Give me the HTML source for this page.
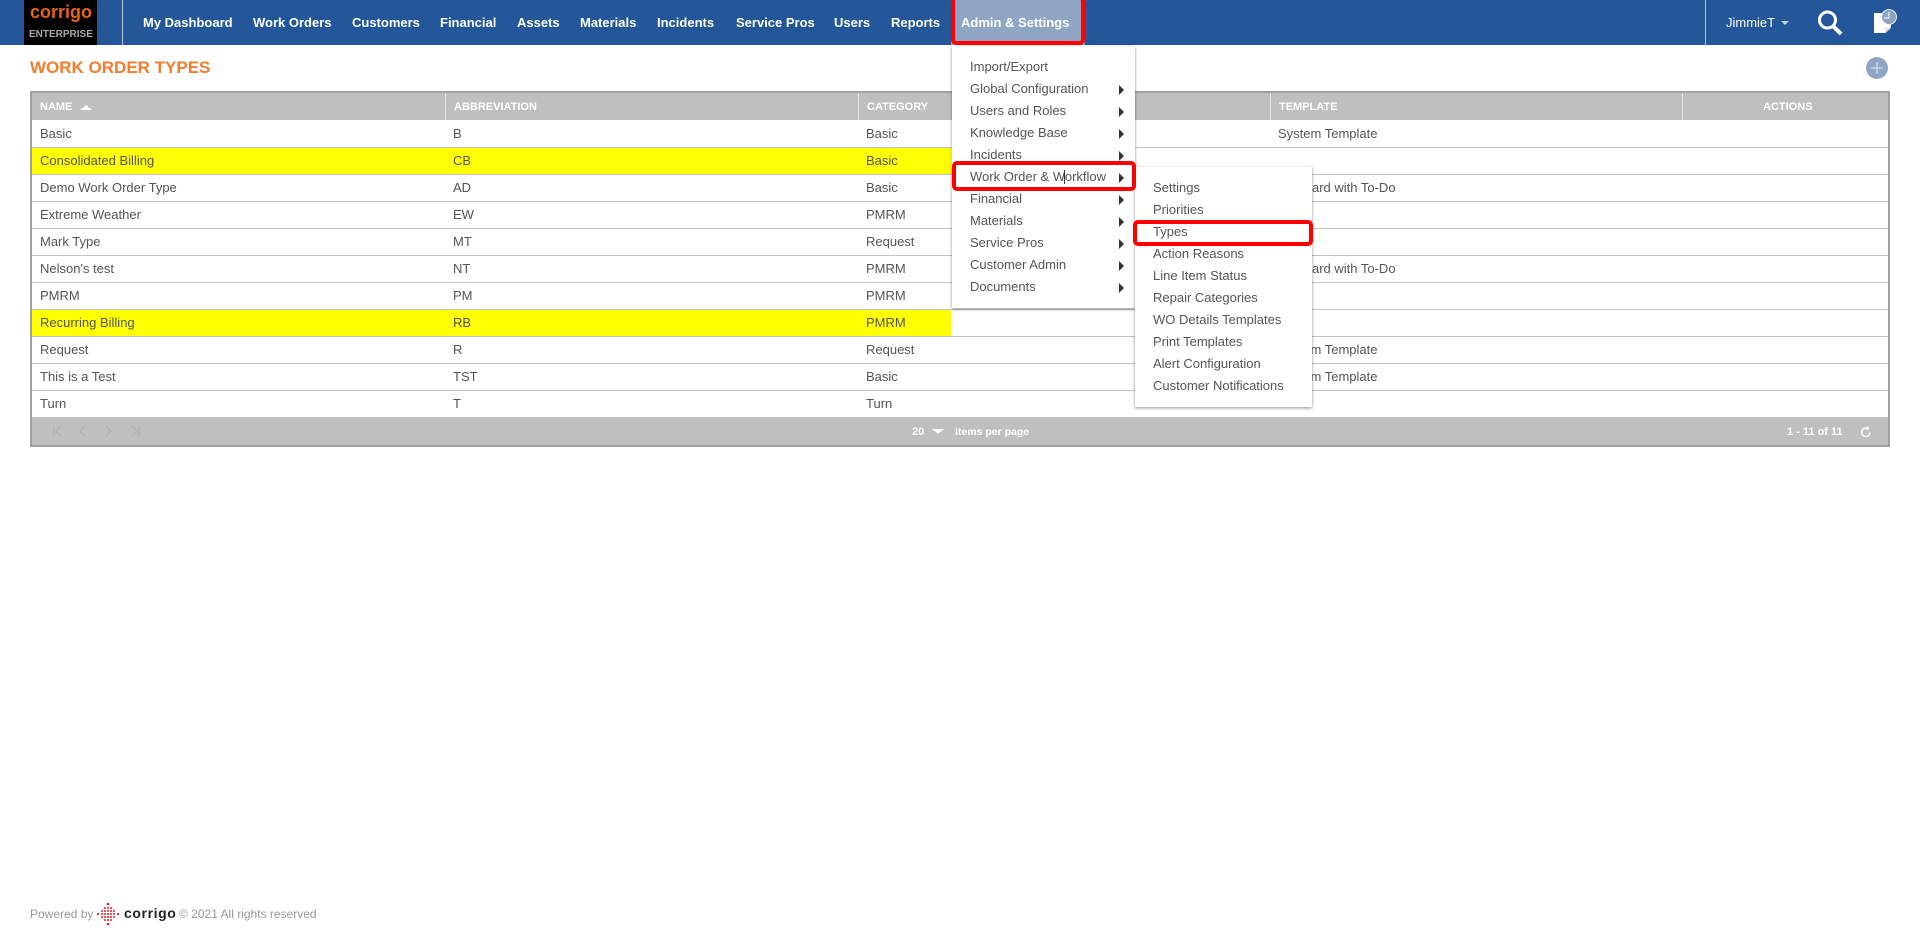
<!DOCTYPE html>
<html><head><meta charset="utf-8"><title>Work Order Types</title>
<style>
*{box-sizing:border-box}
html,body{margin:0;padding:0;width:1920px;height:937px;background:#fff;overflow:hidden;font-family:"Liberation Sans",Arial,sans-serif;color:#555;font-size:13px}
.a{position:absolute;white-space:nowrap}
#hd{position:absolute;left:0;top:0;width:1920px;height:45px;background:#235799}
.n{position:absolute;top:0;line-height:45px;color:#fff;font-weight:bold;font-size:13px;white-space:nowrap}
#tb{position:absolute;left:30px;top:91px;width:1860px;height:356px;border:2px solid #a0a0a0;background:#fff}
.th{position:absolute;top:94px;height:27px;color:#fff;font-weight:bold;font-size:11px;line-height:27px;white-space:nowrap}
.l{position:absolute;left:32px;width:1856px;height:1px;background:#c4c4c4}
.t{position:absolute;line-height:27px;height:27px;white-space:nowrap;color:#555}
.y{position:absolute;left:32px;width:919px;height:27px;background:#ff0}
.m{position:absolute;background:#fff;box-shadow:0 1px 3px rgba(0,0,0,.45)}
.i{position:absolute;line-height:22px;height:22px;white-space:nowrap;color:#555;margin-top:1px}
.r{position:absolute;width:0;height:0;border-left:5px solid #333;border-top:5px solid transparent;border-bottom:5px solid transparent;left:1119px;margin-top:1px}
.b{position:absolute;border:4px solid #f00;border-radius:5px}
</style></head><body>
<div id="hd"></div>
<div class="a" style="left:24px;top:0;width:73px;height:45px;background:#000"></div>
<div class="a" style="left:30px;top:0;font-size:18px;line-height:24px;color:#e8640c;font-weight:bold">corrigo</div>
<div class="a" style="left:29px;top:28px;font-size:10px;line-height:14px;font-weight:bold;color:#aaa">ENTERPRISE</div>
<div class="a" style="left:122px;top:0;width:1px;height:45px;background:#b9c6d9"></div>
<div class="a" style="left:951px;top:0;width:134px;height:45px;background:#8fa5c4"></div>
<div class="n" style="left:143px">My Dashboard</div>
<div class="n" style="left:253px">Work Orders</div>
<div class="n" style="left:352px">Customers</div>
<div class="n" style="left:440px">Financial</div>
<div class="n" style="left:517px">Assets</div>
<div class="n" style="left:580px">Materials</div>
<div class="n" style="left:657px">Incidents</div>
<div class="n" style="left:736px">Service Pros</div>
<div class="n" style="left:834px">Users</div>
<div class="n" style="left:891px">Reports</div>
<div class="n" style="left:961px">Admin &amp; Settings</div>
<div class="a" style="left:1705px;top:0;width:1px;height:45px;background:#b9c6d9"></div>
<div class="n" style="left:1726px;font-weight:normal">JimmieT</div>
<div class="a" style="left:1781px;top:21px;width:0;height:0;border-left:4px solid transparent;border-right:4px solid transparent;border-top:4px solid #c9d3e2"></div>
<svg class="a" style="left:1816px;top:9px" width="28" height="28" viewBox="0 0 28 28"><circle cx="11.5" cy="11" r="8" fill="none" stroke="#fff" stroke-width="3"/><path d="M17 17L25 25" stroke="#fff" stroke-width="4" fill="none"/></svg>
<svg class="a" style="left:1870px;top:8px" width="28" height="28" viewBox="0 0 28 28"><path d="M4 5H21V19L15 25H4Z" fill="#fff"/><path d="M15.5 25V20H21Z" fill="#d5ddea"/><circle cx="19" cy="9" r="7.5" fill="#8fa5c4" stroke="#fff" stroke-width=".8"/><path d="M19 4V10H14" stroke="#fff" stroke-width="1" fill="none"/></svg>

<div class="a" style="left:30px;top:56px;font-size:17px;line-height:24px;font-weight:bold;color:#f47c2c">WORK ORDER TYPES</div>
<svg class="a" style="left:1866px;top:57px" width="22" height="22" viewBox="0 0 22 22"><circle cx="11" cy="11" r="11" fill="#8fa5c4"/><path d="M11 5V17M5 11H17" stroke="#c9d4e4" stroke-width="1.5"/></svg>

<div id="tb"></div>
<div class="a" style="left:32px;top:93px;width:1856px;height:27px;background:#bfbfbf"></div>
<div class="a" style="left:445px;top:93px;width:1px;height:27px;background:#e6e6e6"></div>
<div class="a" style="left:858px;top:93px;width:1px;height:27px;background:#e6e6e6"></div>
<div class="a" style="left:1270px;top:93px;width:1px;height:27px;background:#e6e6e6"></div>
<div class="a" style="left:1682px;top:93px;width:1px;height:27px;background:#e6e6e6"></div>
<div class="th" style="left:40px">NAME</div>
<div class="a" style="left:80px;top:105px;width:0;height:0;border-left:6px solid transparent;border-right:6px solid transparent;border-bottom:5px solid #fff"></div>
<div class="th" style="left:454px">ABBREVIATION</div>
<div class="th" style="left:867px">CATEGORY</div>
<div class="th" style="left:1279px">TEMPLATE</div>
<div class="th" style="left:1763px">ACTIONS</div>

<div class="y" style="top:147px"></div>
<div class="y" style="top:309px"></div>
<div class="l" style="top:147px"></div><div class="l" style="top:174px;"></div><div class="l" style="top:201px"></div><div class="l" style="top:228px"></div><div class="l" style="top:255px"></div><div class="l" style="top:282px"></div><div class="l" style="top:309px"></div><div class="l" style="top:336px"></div><div class="l" style="top:363px"></div><div class="l" style="top:390px"></div>

<div class="t" style="left:40px;top:120px">Basic</div><div class="t" style="left:453px;top:120px">B</div><div class="t" style="left:866px;top:120px">Basic</div><div class="t" style="left:1278px;top:120px">System Template</div>
<div class="t" style="left:40px;top:147px">Consolidated Billing</div><div class="t" style="left:453px;top:147px">CB</div><div class="t" style="left:866px;top:147px">Basic</div>
<div class="t" style="left:40px;top:174px">Demo Work Order Type</div><div class="t" style="left:453px;top:174px">AD</div><div class="t" style="left:866px;top:174px">Basic</div><div class="t" style="left:1278px;top:174px">Standard with To-Do</div>
<div class="t" style="left:40px;top:201px">Extreme Weather</div><div class="t" style="left:453px;top:201px">EW</div><div class="t" style="left:866px;top:201px">PMRM</div>
<div class="t" style="left:40px;top:228px">Mark Type</div><div class="t" style="left:453px;top:228px">MT</div><div class="t" style="left:866px;top:228px">Request</div>
<div class="t" style="left:40px;top:255px">Nelson's test</div><div class="t" style="left:453px;top:255px">NT</div><div class="t" style="left:866px;top:255px">PMRM</div><div class="t" style="left:1278px;top:255px">Standard with To-Do</div>
<div class="t" style="left:40px;top:282px">PMRM</div><div class="t" style="left:453px;top:282px">PM</div><div class="t" style="left:866px;top:282px">PMRM</div>
<div class="t" style="left:40px;top:309px">Recurring Billing</div><div class="t" style="left:453px;top:309px">RB</div><div class="t" style="left:866px;top:309px">PMRM</div>
<div class="t" style="left:40px;top:336px">Request</div><div class="t" style="left:453px;top:336px">R</div><div class="t" style="left:866px;top:336px">Request</div><div class="t" style="left:1278px;top:336px">System Template</div>
<div class="t" style="left:40px;top:363px">This is a Test</div><div class="t" style="left:453px;top:363px">TST</div><div class="t" style="left:866px;top:363px">Basic</div><div class="t" style="left:1278px;top:363px">System Template</div>
<div class="t" style="left:40px;top:390px">Turn</div><div class="t" style="left:453px;top:390px">T</div><div class="t" style="left:866px;top:390px">Turn</div>

<div class="a" style="left:32px;top:417px;width:1856px;height:28px;background:#bfbfbf"></div>
<svg class="a" style="left:50px;top:424px" width="100" height="14" viewBox="0 0 100 14" fill="none" stroke="#b0b0b0" stroke-width="1"><path d="M4 2V12M11 2L6 7L11 12"/><path d="M35 2L30 7L35 12"/><path d="M56 2L61 7L56 12"/><path d="M82 2L87 7L82 12M89 2V12"/></svg>
<div class="a" style="left:912px;top:425px;line-height:14px;font-size:11px;font-weight:bold;color:#fff">20</div>
<div class="a" style="left:932px;top:429px;width:0;height:0;border-left:6px solid transparent;border-right:6px solid transparent;border-top:5px solid #fff"></div>
<div class="a" style="left:955px;top:425px;line-height:14px;font-size:10.5px;font-weight:bold;color:#fff">items per page</div>
<div class="a" style="left:1787px;top:425px;line-height:14px;font-size:11px;font-weight:bold;color:#fff">1 - 11 of 11</div>
<svg class="a" style="left:1859px;top:425px" width="14" height="14" viewBox="0 0 14 14" fill="none" stroke="#fff" stroke-width="1.4"><path d="M11 7.5A4.2 4.2 0 1 1 7.5 3.2"/><path d="M7.5 1V5.5L11 3.2Z" fill="#fff" stroke="none"/></svg>

<div class="m" style="left:952px;top:46px;width:183px;height:262px"></div>
<div class="i" style="left:970px;top:55px">Import/Export</div>
<div class="i" style="left:970px;top:77px">Global Configuration</div><div class="r" style="top:84px"></div>
<div class="i" style="left:970px;top:99px">Users and Roles</div><div class="r" style="top:106px"></div>
<div class="i" style="left:970px;top:121px">Knowledge Base</div><div class="r" style="top:128px"></div>
<div class="i" style="left:970px;top:143px">Incidents</div><div class="r" style="top:150px"></div>
<div class="i" style="left:970px;top:165px">Work Order &amp; Workflow</div><div class="r" style="top:172px"></div>
<div class="i" style="left:970px;top:187px">Financial</div><div class="r" style="top:194px"></div>
<div class="i" style="left:970px;top:209px">Materials</div><div class="r" style="top:216px"></div>
<div class="i" style="left:970px;top:231px">Service Pros</div><div class="r" style="top:238px"></div>
<div class="i" style="left:970px;top:253px">Customer Admin</div><div class="r" style="top:260px"></div>
<div class="i" style="left:970px;top:275px">Documents</div><div class="r" style="top:282px"></div>
<div class="a" style="left:1064px;top:170px;width:1px;height:14px;background:#333"></div>

<div class="m" style="left:1135px;top:167px;width:177px;height:240px"></div>
<div class="i" style="left:1153px;top:176px">Settings</div>
<div class="i" style="left:1153px;top:198px">Priorities</div>
<div class="i" style="left:1153px;top:220px">Types</div>
<div class="i" style="left:1153px;top:242px">Action Reasons</div>
<div class="i" style="left:1153px;top:264px">Line Item Status</div>
<div class="i" style="left:1153px;top:286px">Repair Categories</div>
<div class="i" style="left:1153px;top:308px">WO Details Templates</div>
<div class="i" style="left:1153px;top:330px">Print Templates</div>
<div class="i" style="left:1153px;top:352px">Alert Configuration</div>
<div class="i" style="left:1153px;top:374px">Customer Notifications</div>

<div class="b" style="left:951px;top:-4px;width:134px;height:49px"></div>
<div class="b" style="left:952px;top:161px;width:184px;height:30px"></div>
<div class="b" style="left:1133px;top:220px;width:180px;height:26px"></div>

<div class="a" style="left:30px;top:907px;font-size:12px;line-height:14px;color:#999">Powered by</div>
<svg class="a" style="left:97px;top:902px" width="22" height="24" viewBox="0 0 22 24" fill="#e0202a"><circle cx="11" cy="2" r="1.3"/><circle cx="11" cy="22" r="1.3"/><circle cx="1" cy="12" r="1.1"/><circle cx="21" cy="12" r="1.1"/><circle cx="11" cy="6" r="1"/><circle cx="11" cy="9" r="1"/><circle cx="11" cy="12" r="1"/><circle cx="11" cy="15" r="1"/><circle cx="11" cy="18" r="1"/><circle cx="8" cy="6" r="1"/><circle cx="8" cy="9" r="1"/><circle cx="8" cy="12" r="1"/><circle cx="8" cy="15" r="1"/><circle cx="8" cy="18" r="1"/><circle cx="14" cy="6" r="1"/><circle cx="14" cy="9" r="1"/><circle cx="14" cy="12" r="1"/><circle cx="14" cy="15" r="1"/><circle cx="14" cy="18" r="1"/><circle cx="5" cy="9" r="1"/><circle cx="5" cy="12" r="1"/><circle cx="5" cy="15" r="1"/><circle cx="17" cy="9" r="1"/><circle cx="17" cy="12" r="1"/><circle cx="17" cy="15" r="1"/></svg>
<div class="a" style="left:124px;top:904px;font-size:14px;line-height:18px;color:#222;letter-spacing:.6px;font-weight:bold">corrigo</div>
<div class="a" style="left:179px;top:907px;font-size:12px;line-height:14px;color:#999">© 2021 All rights reserved</div>
</body></html>
